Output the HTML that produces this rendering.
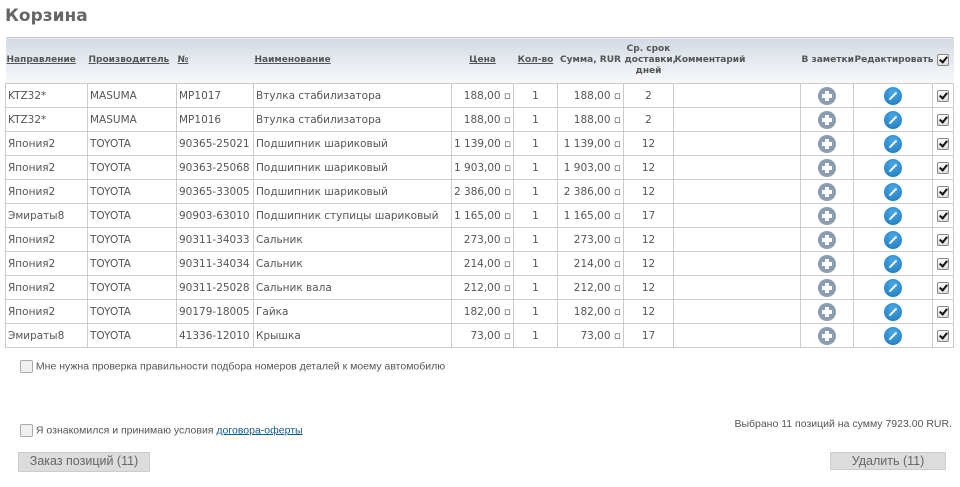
<!DOCTYPE html>
<html><head><meta charset="utf-8"><style>
body{margin:0;background:#fff;font-family:"DejaVu Sans","Liberation Sans",sans-serif;color:#555;width:960px;height:487px;overflow:hidden;position:relative}
h1{position:absolute;left:5px;top:6px;margin:0;font-size:17px;font-weight:bold;color:#666;font-family:"DejaVu Sans",sans-serif}
table{position:absolute;left:5px;top:37px;border-collapse:collapse;table-layout:fixed;width:948px}
th{height:45px;padding:0 1px;font-size:9px;font-weight:bold;color:#555;background:linear-gradient(#d4dae4,#f8f9fb);border-top:1px solid #c8c8c8;vertical-align:middle;text-align:center;line-height:11px;white-space:nowrap}
th.w{white-space:normal}
th u{color:#555}
th.l{text-align:left}
td{height:23px;border:1px solid #ccc;font-size:10.5px;padding:0 2px;white-space:nowrap;overflow:hidden;color:#555}
.r{text-align:right}.c{text-align:center}
.cb{display:inline-block;width:10px;height:10px;border:1px solid #888;background:linear-gradient(#fff,#ddd);border-radius:2px;position:relative;vertical-align:middle}
.cb:after{content:"";position:absolute;left:3px;top:0px;width:3px;height:6px;border:solid #111;border-width:0 2px 2px 0;transform:rotate(40deg)}
.ico{display:inline-block;width:18px;height:18px;border-radius:50%;vertical-align:middle;position:relative}
.plus{background:#8c9db2}
.plus:before{content:"";position:absolute;left:4px;top:7px;width:10px;height:4px;background:#fff}
.plus:after{content:"";position:absolute;left:7px;top:4px;width:4px;height:10px;background:#fff}
.pen{background:radial-gradient(circle at 50% 30%,#4aa8e6,#1a78bf)}
.pen:after{content:"";position:absolute;left:8px;top:4px;width:2px;height:10px;background:#fff;transform:rotate(45deg)}
.ob{display:inline-block;width:11px;height:11px;border:1px solid #aaa;border-radius:2px;background:#f0f0f0;vertical-align:middle}
.t{position:absolute;font-size:10.5px;color:#555;font-family:"Liberation Sans",sans-serif}
.btn{position:absolute;background:#dcdcdc;border:1px solid #ccc;font-size:12.5px;color:#666;font-family:"Liberation Sans",sans-serif;text-align:center;line-height:17px}
</style></head><body>
<h1>Корзина</h1>
<table>
<colgroup><col style="width:82px"><col style="width:89px"><col style="width:77px"><col style="width:198px"><col style="width:62px"><col style="width:44px"><col style="width:66px"><col style="width:50px"><col style="width:127px"><col style="width:53px"><col style="width:79px"><col style="width:21px"></colgroup>
<tr><th class="l"><u>Направление</u></th><th class="l"><u>Производитель</u></th><th class="l"><u>№</u></th><th class="l"><u>Наименование</u></th><th><u>Цена</u></th><th><u>Кол-во</u></th><th>Сумма, RUR</th><th class="w">Ср. срок доставки, дней</th><th class="l">Комментарий</th><th>В заметки</th><th>Редактировать</th><th><span class="cb"></span></th></tr>
<tr><td>KTZ32*</td><td>MASUMA</td><td>MP1017</td><td>Втулка стабилизатора</td><td class="r">188,00 ▫</td><td class="c">1</td><td class="r">188,00 ▫</td><td class="c">2</td><td></td><td class="c"><span class="ico plus"></span></td><td class="c"><span class="ico pen"></span></td><td class="c"><span class="cb"></span></td></tr>
<tr><td>KTZ32*</td><td>MASUMA</td><td>MP1016</td><td>Втулка стабилизатора</td><td class="r">188,00 ▫</td><td class="c">1</td><td class="r">188,00 ▫</td><td class="c">2</td><td></td><td class="c"><span class="ico plus"></span></td><td class="c"><span class="ico pen"></span></td><td class="c"><span class="cb"></span></td></tr>
<tr><td>Япония2</td><td>TOYOTA</td><td>90365-25021</td><td>Подшипник шариковый</td><td class="r">1 139,00 ▫</td><td class="c">1</td><td class="r">1 139,00 ▫</td><td class="c">12</td><td></td><td class="c"><span class="ico plus"></span></td><td class="c"><span class="ico pen"></span></td><td class="c"><span class="cb"></span></td></tr>
<tr><td>Япония2</td><td>TOYOTA</td><td>90363-25068</td><td>Подшипник шариковый</td><td class="r">1 903,00 ▫</td><td class="c">1</td><td class="r">1 903,00 ▫</td><td class="c">12</td><td></td><td class="c"><span class="ico plus"></span></td><td class="c"><span class="ico pen"></span></td><td class="c"><span class="cb"></span></td></tr>
<tr><td>Япония2</td><td>TOYOTA</td><td>90365-33005</td><td>Подшипник шариковый</td><td class="r">2 386,00 ▫</td><td class="c">1</td><td class="r">2 386,00 ▫</td><td class="c">12</td><td></td><td class="c"><span class="ico plus"></span></td><td class="c"><span class="ico pen"></span></td><td class="c"><span class="cb"></span></td></tr>
<tr><td>Эмираты8</td><td>TOYOTA</td><td>90903-63010</td><td>Подшипник ступицы шариковый</td><td class="r">1 165,00 ▫</td><td class="c">1</td><td class="r">1 165,00 ▫</td><td class="c">17</td><td></td><td class="c"><span class="ico plus"></span></td><td class="c"><span class="ico pen"></span></td><td class="c"><span class="cb"></span></td></tr>
<tr><td>Япония2</td><td>TOYOTA</td><td>90311-34033</td><td>Сальник</td><td class="r">273,00 ▫</td><td class="c">1</td><td class="r">273,00 ▫</td><td class="c">12</td><td></td><td class="c"><span class="ico plus"></span></td><td class="c"><span class="ico pen"></span></td><td class="c"><span class="cb"></span></td></tr>
<tr><td>Япония2</td><td>TOYOTA</td><td>90311-34034</td><td>Сальник</td><td class="r">214,00 ▫</td><td class="c">1</td><td class="r">214,00 ▫</td><td class="c">12</td><td></td><td class="c"><span class="ico plus"></span></td><td class="c"><span class="ico pen"></span></td><td class="c"><span class="cb"></span></td></tr>
<tr><td>Япония2</td><td>TOYOTA</td><td>90311-25028</td><td>Сальник вала</td><td class="r">212,00 ▫</td><td class="c">1</td><td class="r">212,00 ▫</td><td class="c">12</td><td></td><td class="c"><span class="ico plus"></span></td><td class="c"><span class="ico pen"></span></td><td class="c"><span class="cb"></span></td></tr>
<tr><td>Япония2</td><td>TOYOTA</td><td>90179-18005</td><td>Гайка</td><td class="r">182,00 ▫</td><td class="c">1</td><td class="r">182,00 ▫</td><td class="c">12</td><td></td><td class="c"><span class="ico plus"></span></td><td class="c"><span class="ico pen"></span></td><td class="c"><span class="cb"></span></td></tr>
<tr><td>Эмираты8</td><td>TOYOTA</td><td>41336-12010</td><td>Крышка</td><td class="r">73,00 ▫</td><td class="c">1</td><td class="r">73,00 ▫</td><td class="c">17</td><td></td><td class="c"><span class="ico plus"></span></td><td class="c"><span class="ico pen"></span></td><td class="c"><span class="cb"></span></td></tr>
</table>
<div class="t" style="left:20px;top:360px"><span class="ob"></span> Мне нужна проверка правильности подбора номеров деталей к моему автомобилю</div>
<div class="t" style="left:20px;top:424px"><span class="ob"></span> Я ознакомился и принимаю условия <span style="color:#1a5a8a;text-decoration:underline">договора-оферты</span></div>
<div class="t" style="right:8px;top:418px">Выбрано 11 позиций на сумму 7923.00 RUR.</div>
<div class="btn" style="left:18px;top:452px;width:130px;height:18px">Заказ позиций (11)</div>
<div class="btn" style="left:830px;top:452px;width:114px;height:16px">Удалить (11)</div>
</body></html>
